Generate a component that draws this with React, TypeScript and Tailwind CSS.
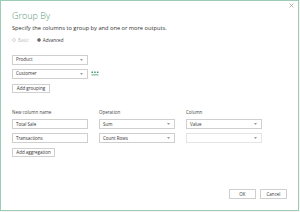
import React from "react";

const FONT = { fontFamily: '"Open Sans", "Noto Sans", Arial, sans-serif' };

function Caret() {
  return (
    <svg width="3" height="2" viewBox="0 0 3 2" className="shrink-0">
      <path d="M0 0 L3 0 L1.5 2 Z" fill="#9a9a9a" />
    </svg>
  );
}

function Select({ value, width = "w-[76px]", disabled = false }: { value: string; width?: string; disabled?: boolean }) {
  return (
    <div
      className={`${width} h-[10px] border flex items-center justify-between pl-[3px] pr-[4px] text-[4.5px] leading-none ${
        disabled ? "border-[#e4e4e4] text-[#bbb]" : "border-[#cfcfcf] text-[#333]"
      }`}
    >
      <span>{value}</span>
      <Caret />
    </div>
  );
}

function Input({ value }: { value: string }) {
  return (
    <div className="w-[76px] h-[10px] border border-[#cfcfcf] flex items-center pl-[3px] text-[4.5px] leading-none text-[#333]">
      {value}
    </div>
  );
}

function Button({ label, className = "" }: { label: string; className?: string }) {
  return (
    <div
      className={`h-[9px] border border-[#cfcfcf] flex items-center justify-center text-[4.5px] leading-none text-[#333] bg-white ${className}`}
    >
      {label}
    </div>
  );
}

export default function App() {
  return (
    <div className="w-[300px] h-[212px] bg-[#f4f4f4]" style={FONT}>
      <div className="relative w-[299px] h-[211px] border border-[#9ecbb5] bg-white flex flex-col pl-[11px]">
        <svg width="5" height="5" viewBox="0 0 5 5" className="absolute top-[2px] right-[4px]">
          <path d="M0.5 0.5 L4.5 4.5 M4.5 0.5 L0.5 4.5" stroke="#999" strokeWidth="0.7" />
        </svg>

        <div className="mt-[9px] text-[9px] leading-[12px] font-light text-[#5a9878]">Group By</div>
        <div className="mt-[3px] text-[5.7px] leading-[7px] text-[#333]">
          Specify the columns to group by and one or more outputs.
        </div>

        <div className="mt-[6px] flex items-center gap-[2px] text-[4.5px] leading-none">
          <span className="w-[4px] h-[4px] rounded-full border border-[#d8d8d8]" />
          <span className="text-[#bbb] mr-[6px]">Basic</span>
          <span className="w-[4px] h-[4px] rounded-full border border-[#888] flex items-center justify-center">
            <span className="w-[2px] h-[2px] rounded-full bg-[#444]" />
          </span>
          <span className="text-[#333]">Advanced</span>
        </div>

        <div className="mt-[12px] flex flex-col gap-[4px]">
          <Select value="Product" />
          <div className="flex items-center gap-[3px]">
            <Select value="Customer" />
            <svg width="8" height="5" viewBox="0 0 8 5">
              <rect x="0.5" y="0.5" width="1.5" height="1.5" fill="#3f9a6c" />
              <rect x="3.2" y="0.5" width="1.5" height="1.5" fill="#3f9a6c" />
              <rect x="5.9" y="0.5" width="1.5" height="1.5" fill="#3f9a6c" />
              <rect x="0.5" y="3.5" width="7" height="0.8" fill="#3f9a6c" />
            </svg>
          </div>
        </div>
        <Button label="Add grouping" className="mt-[5px] w-[38px]" />

        <div className="mt-[17px] grid grid-cols-[76px_76px_76px] gap-x-[11px] gap-y-[4px] text-[4.5px] leading-none">
          <div className="text-[#444] mb-[1px]">New column name</div>
          <div className="text-[#444] mb-[1px]">Operation</div>
          <div className="text-[#444] mb-[1px]">Column</div>
          <Input value="Total Sale" />
          <Select value="Sum" />
          <Select value="Value" />
          <Input value="Transactions" />
          <Select value="Count Rows" />
          <Select value="" disabled />
        </div>
        <Button label="Add aggregation" className="mt-[5px] w-[43px]" />

        <div className="mt-auto mb-[11px] mr-[11px] flex justify-end gap-[4px]">
          <Button label="OK" className="w-[27px] h-[10px] border-[#8fc4aa]" />
          <Button label="Cancel" className="w-[27px] h-[10px]" />
        </div>
      </div>
    </div>
  );
}
